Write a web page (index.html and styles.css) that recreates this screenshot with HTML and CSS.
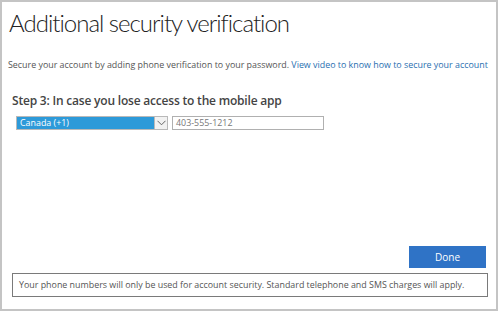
FILE: index.html
```html
<!DOCTYPE html>
<html lang="en">
<head>
  <meta charset="UTF-8">
  <meta name="viewport" content="width=device-width, initial-scale=1.0">
  <title>Additional security verification</title>
  <link rel="stylesheet" href="styles.css">
</head>
<body>
  <div class="frame">
    <h1 class="title">Additional security verification</h1>
    <p class="intro">Secure your account by adding phone verification to your password. <a class="intro-link" href="#">View video to know how to secure your account</a></p>
    <h2 class="step">Step 3: In case you lose access to the mobile app</h2>
    <div class="phone-row">
      <div class="country">
        <span class="country-name">Canada (+1)</span>
        <span class="country-arrow">
          <svg width="9" height="6" viewBox="0 0 9 6"><path d="M0.5 0.8 L4.5 4.8 L8.5 0.8" fill="none" stroke="#666" stroke-width="1"/></svg>
        </span>
      </div>
      <div class="phone-input">403-555-1212</div>
    </div>
    <div class="actions">
      <button class="done-btn">Done</button>
    </div>
    <div class="notice">Your phone numbers will only be used for account security. Standard telephone and SMS charges will apply.</div>
  </div>
</body>
</html>
```

FILE: styles.css
```css
html, body {
  margin: 0;
  padding: 0;
  background: #fff;
}
.frame {
  box-sizing: border-box;
  width: 498px;
  height: 311px;
  border: 2px solid #c4c4c4;
  display: flex;
  flex-direction: column;
  font-family: "Open Sans", "Liberation Sans", sans-serif;
  color: #444;
}
.title {
  margin: 4px 0 0 7px;
  font-family: Lato, "Open Sans", sans-serif;
  font-size: 24px;
  font-weight: 300;
  color: #222;
  line-height: 34px;
  letter-spacing: -1px;
}
.intro {
  margin: 19px 0 0 6px;
  font-size: 8.9px;
  color: #555;
  line-height: 12px;
  white-space: nowrap;
}
.intro-link {
  color: #2a6fb0;
  text-decoration: none;
}
.step {
  margin: 22px 0 0 10px;
  font-size: 12px;
  font-weight: 600;
  color: #444;
  line-height: 16px;
  letter-spacing: -0.2px;
}
.phone-row {
  display: flex;
  gap: 4px;
  margin: 7px 0 0 14px;
}
.country {
  display: flex;
  width: 152px;
  height: 14px;
  box-sizing: border-box;
  border: 1px solid #b9b9b9;
}
.country-name {
  flex: 1;
  background: #2d9ad9;
  color: #fff;
  font-size: 8.9px;
  line-height: 12px;
  padding-left: 3px;
}
.country-arrow {
  width: 12px;
  background: #f2f2f2;
  border-left: 1px solid #b9b9b9;
  display: flex;
  align-items: center;
  justify-content: center;
}
.phone-input {
  width: 152px;
  height: 14px;
  box-sizing: border-box;
  border: 1px solid #b0b0b0;
  font-size: 8.9px;
  line-height: 12px;
  color: #777;
  padding-left: 3px;
}
.actions {
  display: flex;
  justify-content: flex-end;
  margin: auto 10px 0 0;
}
.done-btn {
  width: 77px;
  height: 22px;
  border: none;
  background: #2f73c6;
  color: #fff;
  font-family: "Open Sans", "Liberation Sans", sans-serif;
  font-size: 10px;
}
.notice {
  margin: 5px 8px 12px 10px;
  border: 1px solid #7a7a7a;
  height: 24px;
  box-sizing: border-box;
  font-size: 8.9px;
  line-height: 22px;
  color: #555;
  padding-left: 6px;
}
```
